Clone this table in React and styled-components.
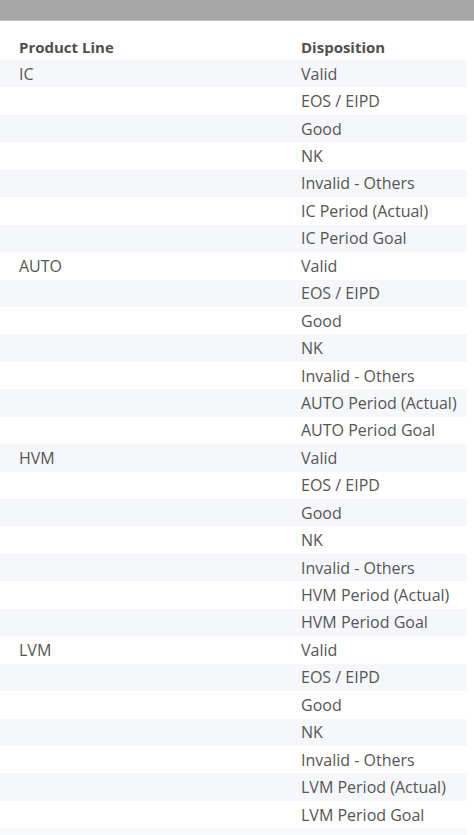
import React from "react";
import styled, { createGlobalStyle } from "styled-components";

const Global = createGlobalStyle`
  html, body { margin: 0; padding: 0; background: #ffffff; }
  body { font-family: "Open Sans", "Noto Sans", sans-serif; }
`;

const Page = styled.div`
  width: 474px;
  height: 835px;
  overflow: hidden;
  background: #ffffff;
  display: flex;
  flex-direction: column;
`;

const TopBar = styled.div`
  height: 20px;
  background: #a6a6a6;
  border-bottom: 1px solid #c4c4c4;
  flex-shrink: 0;
`;

const Table = styled.div`
  margin-top: 12px;
  width: 467px;
  display: flex;
  flex-direction: column;
`;

const Row = styled.div`
  display: grid;
  grid-template-columns: 301px 1fr;
  height: ${(p) => (p.$header ? "27px" : "27.45px")};
  align-items: center;
  background: ${(p) => (p.$striped ? "#f5f7fb" : "#ffffff")};
  color: ${(p) => (p.$header ? "#4f4f4f" : "#555555")};
  font-size: ${(p) => (p.$header ? "15px" : "16px")};
  font-weight: ${(p) => (p.$header ? 700 : 400)};
  white-space: nowrap;
`;

const Cell = styled.div`
  padding-left: ${(p) => (p.$first ? "19px" : "0")};
`;

const BottomStrip = styled.div`
  height: 8px;
  background: #f7f8fb;
`;

const groups = ["IC", "AUTO", "HVM", "LVM"];
const dispositions = (g) => [
  "Valid",
  "EOS / EIPD",
  "Good",
  "NK",
  "Invalid - Others",
  `${g} Period (Actual)`,
  `${g} Period Goal`,
];

export default function App() {
  const rows = [];
  groups.forEach((g) => {
    dispositions(g).forEach((d, i) => {
      rows.push({ line: i === 0 ? g : "", disp: d });
    });
  });
  return (
    <Page>
      <Global />
      <TopBar />
      <Table>
        <Row $header>
          <Cell $first>Product Line</Cell>
          <Cell>Disposition</Cell>
        </Row>
        {rows.map((r, idx) => (
          <Row key={idx} $striped={idx % 2 === 0}>
            <Cell $first>{r.line}</Cell>
            <Cell>{r.disp}</Cell>
          </Row>
        ))}
        <BottomStrip />
      </Table>
    </Page>
  );
}
